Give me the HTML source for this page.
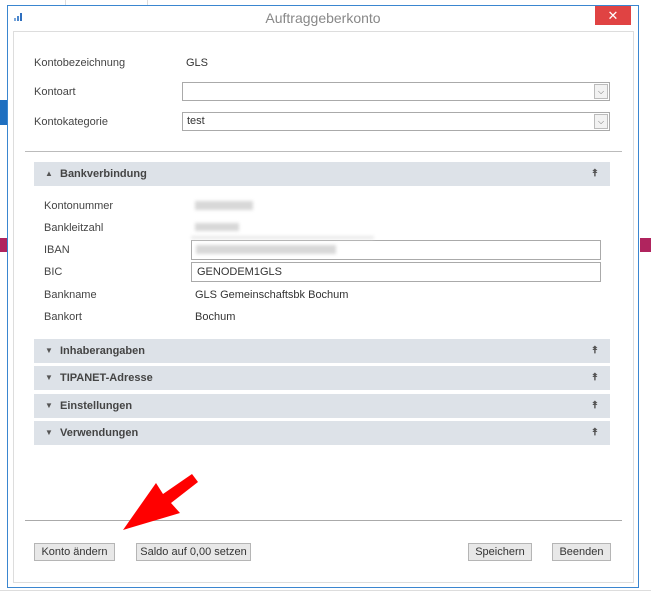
<!DOCTYPE html>
<html><head><meta charset="utf-8"><style>
*{margin:0;padding:0;box-sizing:border-box}
body{width:651px;height:600px;background:#fff;position:relative;overflow:hidden;font-family:"Liberation Sans",sans-serif;font-size:11px;color:#333}
.a{position:absolute}
.lbl{position:absolute;left:34px;font-size:11px;color:#444}
.hdr{position:absolute;left:34px;width:576px;height:24px;background:#dde2e8;font-weight:bold;font-size:11px;color:#444;line-height:24px;padding-left:26px}
.hdr .t{position:absolute;left:11px;top:0;font-size:8px;color:#555}
.hdr .p{position:absolute;right:12px;top:0;font-size:10px;color:#555}
.cb{position:absolute;left:182px;width:428px;height:19px;border:1px solid #aaa;background:#fff;padding-left:4px;line-height:17px}
.cb .ar{position:absolute;right:1px;top:1px;width:14px;height:15px;border:1px solid #bbb;background:#f2f2f2;font-size:8px;text-align:center;line-height:13px;color:#666}
.in{position:absolute;left:191px;width:410px;height:20px;border:1px solid #aaa;padding-left:5px;line-height:18px}
.btn{position:absolute;top:543px;height:18px;border:1px solid #b5b5b5;background:#e8e8e8;text-align:center;line-height:16px;font-size:11px;color:#333}
.blur{position:absolute;background:#d8d8d8;filter:blur(1.5px)}
</style></head><body>
<div class="a" style="left:65px;top:0;width:83px;height:6px;border:1px solid #ddd;border-top:none"></div>
<div class="a" style="left:0;top:100px;width:7px;height:25px;background:#1e6fc0"></div>
<div class="a" style="left:0;top:238px;width:7px;height:14px;background:#b0245e"></div>
<div class="a" style="left:640px;top:238px;width:11px;height:14px;background:#b0245e"></div>
<div class="a" style="left:0;top:590px;width:651px;height:1px;background:#ddd"></div>
<div class="a" style="left:7px;top:5px;width:632px;height:583px;border:1px solid #3a86d0;background:#fff"></div>
<div class="a" style="left:595px;top:6px;width:36px;height:19px;background:#e04343;color:#fff;text-align:center;font-size:13px;line-height:19px">✕</div>
<div class="a" style="left:14px;top:12px"><div class="a" style="left:0;top:6px;width:2px;height:3px;background:#7aa7db"></div><div class="a" style="left:3px;top:4px;width:2px;height:5px;background:#4a86cc"></div><div class="a" style="left:6px;top:1px;width:2px;height:8px;background:#2f6fbf"></div></div>
<div class="a" style="left:0;top:10px;width:646px;text-align:center;font-size:14px;color:#888">Auftraggeberkonto</div>
<div class="a" style="left:13px;top:31px;width:621px;height:552px;border:1px solid #ddd"></div>

<div class="lbl" style="top:57px">Kontobezeichnung</div>
<div class="a" style="left:186px;top:57px">GLS</div>
<div class="lbl" style="top:86px">Kontoart</div>
<div class="cb" style="top:82px"><div class="ar">⌵</div></div>
<div class="lbl" style="top:116px">Kontokategorie</div>
<div class="cb" style="top:112px">test<div class="ar">⌵</div></div>
<div class="a" style="left:25px;top:151px;width:597px;height:1px;background:#bbb"></div>

<div class="hdr" style="top:162px"><span class="t">▲</span>Bankverbindung<span class="p">⯭</span></div>
<div class="lbl" style="top:200px;left:44px">Kontonummer</div>
<div class="blur" style="left:195px;top:201px;width:58px;height:9px"></div>
<div class="lbl" style="top:222px;left:44px">Bankleitzahl</div>
<div class="blur" style="left:195px;top:223px;width:44px;height:8px"></div>
<div class="lbl" style="top:244px;left:44px">IBAN</div>
<div class="in" style="top:240px"></div>
<div class="blur" style="left:191px;top:236px;width:183px;height:3px;background:#e8e8e8"></div>
<div class="blur" style="left:196px;top:245px;width:140px;height:9px"></div>
<div class="lbl" style="top:266px;left:44px">BIC</div>
<div class="in" style="top:262px">GENODEM1GLS</div>
<div class="lbl" style="top:289px;left:44px">Bankname</div>
<div class="a" style="left:195px;top:289px">GLS Gemeinschaftsbk Bochum</div>
<div class="lbl" style="top:311px;left:44px">Bankort</div>
<div class="a" style="left:195px;top:311px">Bochum</div>

<div class="hdr" style="top:339px"><span class="t">▼</span>Inhaberangaben<span class="p">⯭</span></div>
<div class="hdr" style="top:366px"><span class="t">▼</span>TIPANET-Adresse<span class="p">⯭</span></div>
<div class="hdr" style="top:394px"><span class="t">▼</span>Einstellungen<span class="p">⯭</span></div>
<div class="hdr" style="top:421px"><span class="t">▼</span>Verwendungen<span class="p">⯭</span></div>

<div class="a" style="left:25px;top:520px;width:597px;height:1px;background:#aaa"></div>
<div class="btn" style="left:34px;width:81px">Konto ändern</div>
<div class="btn" style="left:136px;width:115px">Saldo auf 0,00 setzen</div>
<div class="btn" style="left:468px;width:64px">Speichern</div>
<div class="btn" style="left:552px;width:59px">Beenden</div>

<svg class="a" style="left:0;top:0" width="651" height="600"><polygon points="123,530 156,483 163,494 192,474 198,482 171,503 180,513" fill="#f00"/></svg>
</body></html>
